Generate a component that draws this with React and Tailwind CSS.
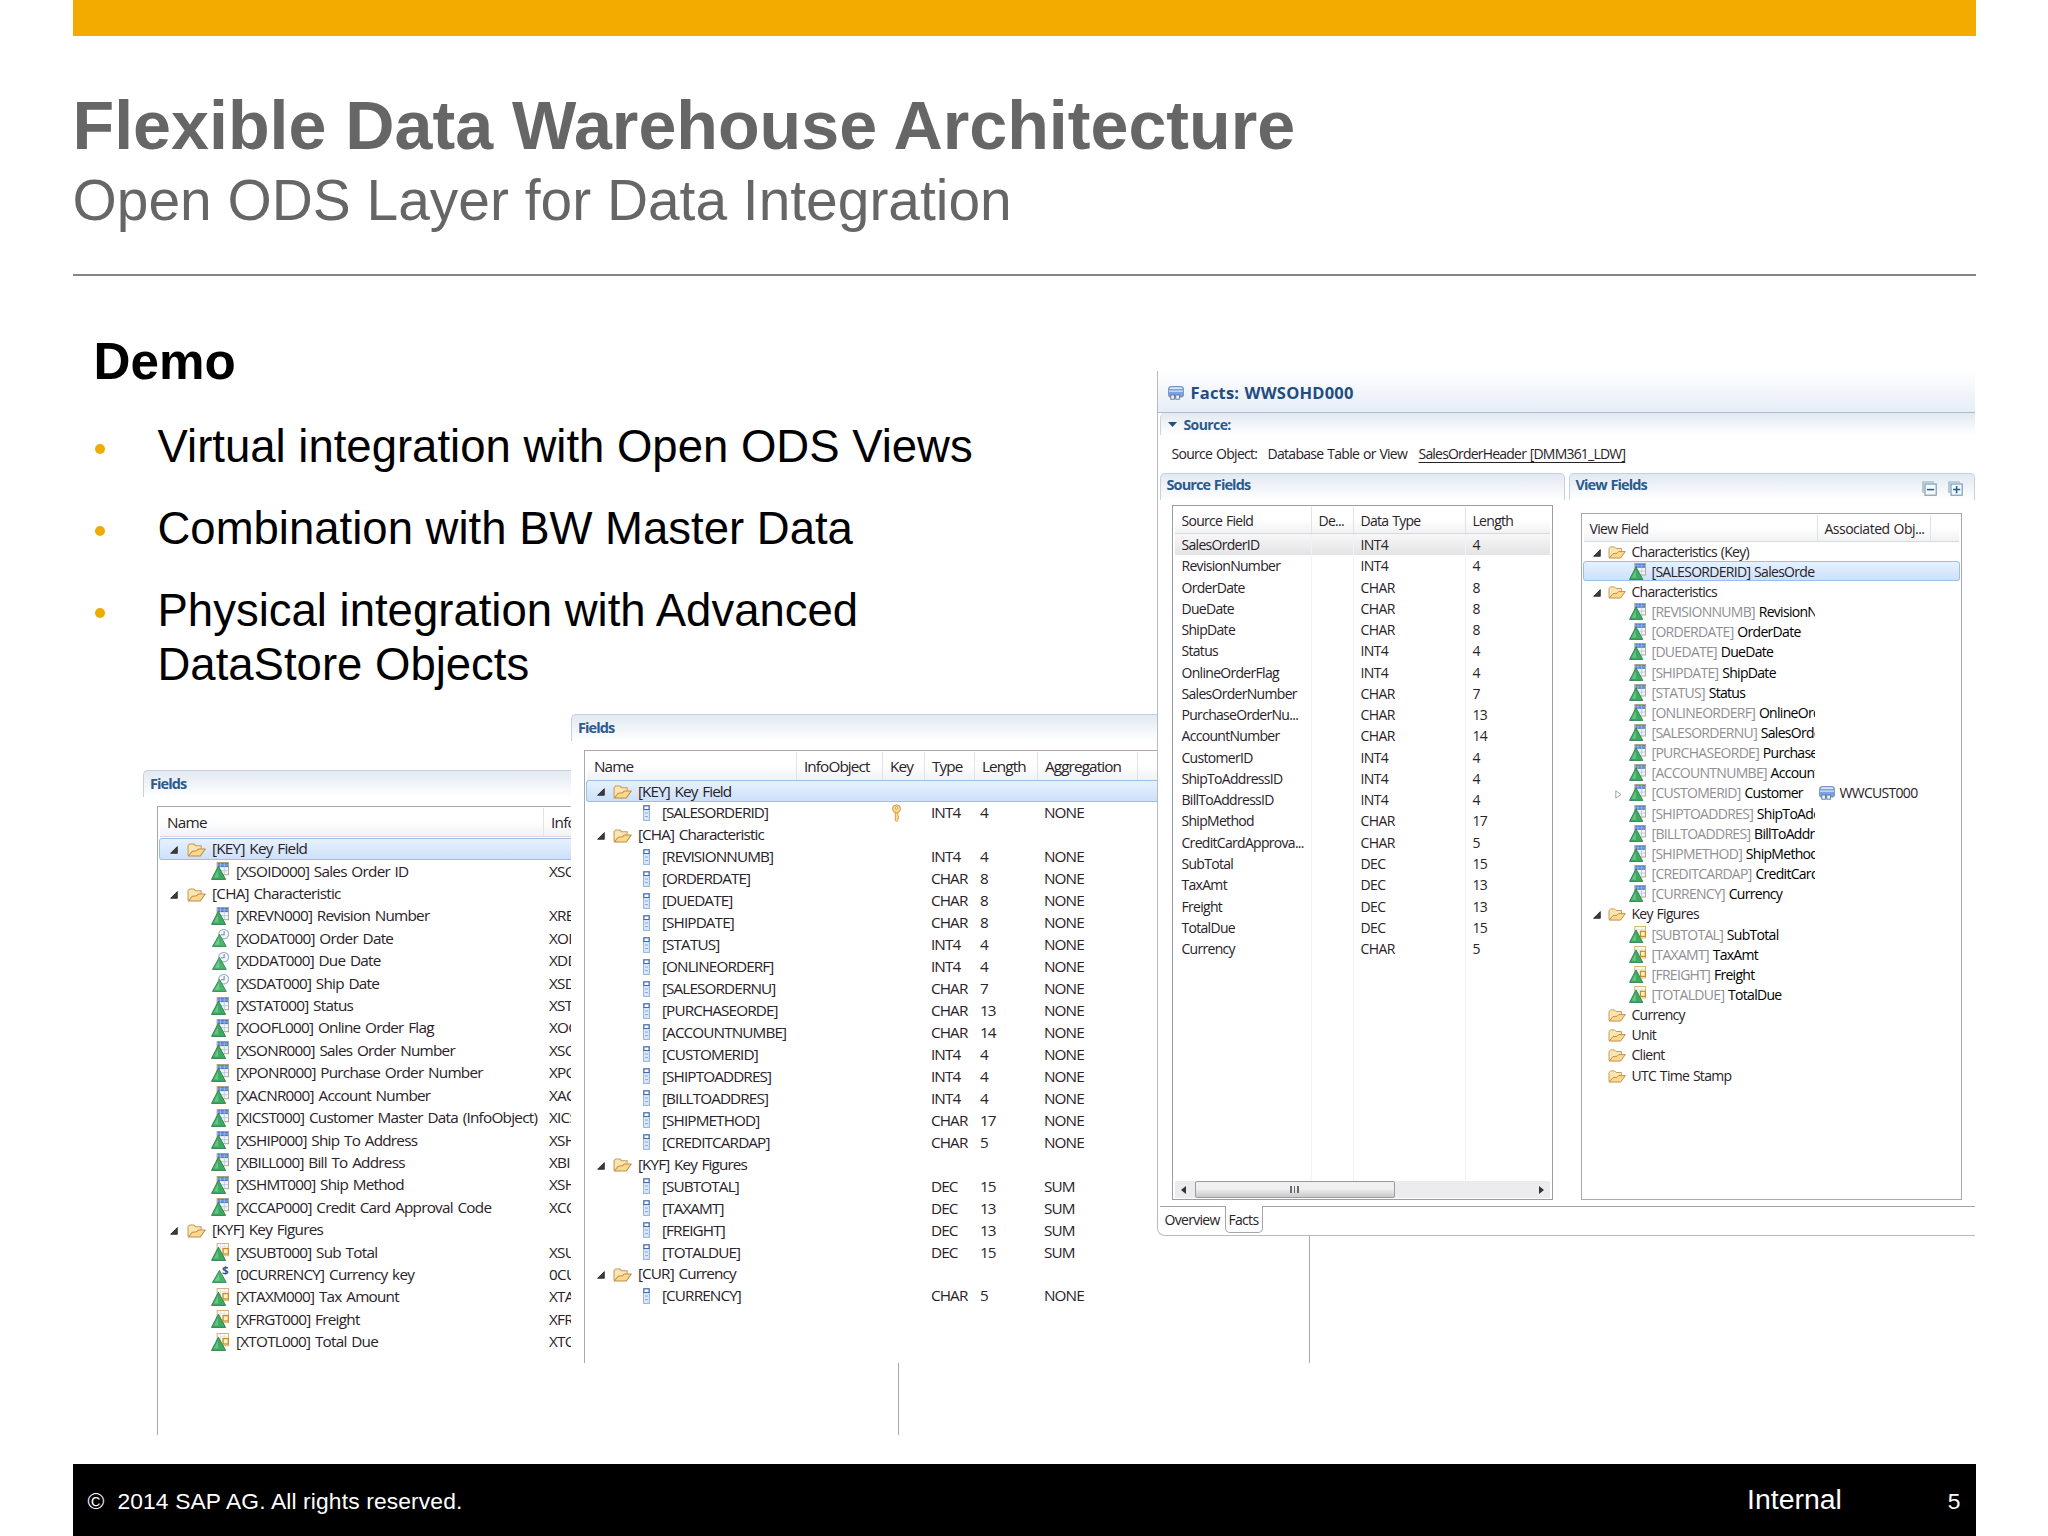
const segoe = "font-['Open_Sans','Noto_Sans',sans-serif]"

// label, icon, second column
const infoRows = [
  ['[KEY] Key Field', 'folder', '', true],
  ['[XSOID000] Sales Order ID', 'cha', 'XSOID000'],
  ['[CHA] Characteristic', 'folder', ''],
  ['[XREVN000] Revision Number', 'cha', 'XREVN000'],
  ['[XODAT000] Order Date', 'time', 'XODAT000'],
  ['[XDDAT000] Due Date', 'time', 'XDDAT000'],
  ['[XSDAT000] Ship Date', 'time', 'XSDAT000'],
  ['[XSTAT000] Status', 'cha', 'XSTAT000'],
  ['[XOOFL000] Online Order Flag', 'cha', 'XOOFL000'],
  ['[XSONR000] Sales Order Number', 'cha', 'XSONR000'],
  ['[XPONR000] Purchase Order Number', 'cha', 'XPONR000'],
  ['[XACNR000] Account Number', 'cha', 'XACNR000'],
  ['[XICST000] Customer Master Data (InfoObject)', 'cha', 'XICST000'],
  ['[XSHIP000] Ship To Address', 'cha', 'XSHIP000'],
  ['[XBILL000] Bill To Address', 'cha', 'XBILL000'],
  ['[XSHMT000] Ship Method', 'cha', 'XSHMT000'],
  ['[XCCAP000] Credit Card Approval Code', 'cha', 'XCCAP000'],
  ['[KYF] Key Figures', 'folder', ''],
  ['[XSUBT000] Sub Total', 'kyf', 'XSUBT000'],
  ['[0CURRENCY] Currency key', 'cur', '0CURRENCY'],
  ['[XTAXM000] Tax Amount', 'kyf', 'XTAXM000'],
  ['[XFRGT000] Freight', 'kyf', 'XFRGT000'],
  ['[XTOTL000] Total Due', 'kyf', 'XTOTL000'],
]

const dsoRows = [
  ['[KEY] Key Field'],
  ['[SALESORDERID]', 'INT4', '4', 'NONE'],
  ['[CHA] Characteristic'],
  ['[REVISIONNUMB]', 'INT4', '4', 'NONE'],
  ['[ORDERDATE]', 'CHAR', '8', 'NONE'],
  ['[DUEDATE]', 'CHAR', '8', 'NONE'],
  ['[SHIPDATE]', 'CHAR', '8', 'NONE'],
  ['[STATUS]', 'INT4', '4', 'NONE'],
  ['[ONLINEORDERF]', 'INT4', '4', 'NONE'],
  ['[SALESORDERNU]', 'CHAR', '7', 'NONE'],
  ['[PURCHASEORDE]', 'CHAR', '13', 'NONE'],
  ['[ACCOUNTNUMBE]', 'CHAR', '14', 'NONE'],
  ['[CUSTOMERID]', 'INT4', '4', 'NONE'],
  ['[SHIPTOADDRES]', 'INT4', '4', 'NONE'],
  ['[BILLTOADDRES]', 'INT4', '4', 'NONE'],
  ['[SHIPMETHOD]', 'CHAR', '17', 'NONE'],
  ['[CREDITCARDAP]', 'CHAR', '5', 'NONE'],
  ['[KYF] Key Figures'],
  ['[SUBTOTAL]', 'DEC', '15', 'SUM'],
  ['[TAXAMT]', 'DEC', '13', 'SUM'],
  ['[FREIGHT]', 'DEC', '13', 'SUM'],
  ['[TOTALDUE]', 'DEC', '15', 'SUM'],
  ['[CUR] Currency'],
  ['[CURRENCY]', 'CHAR', '5', 'NONE'],
]

const sourceRows = [
  ['SalesOrderID', 'INT4', '4'],
  ['RevisionNumber', 'INT4', '4'],
  ['OrderDate', 'CHAR', '8'],
  ['DueDate', 'CHAR', '8'],
  ['ShipDate', 'CHAR', '8'],
  ['Status', 'INT4', '4'],
  ['OnlineOrderFlag', 'INT4', '4'],
  ['SalesOrderNumber', 'CHAR', '7'],
  ['PurchaseOrderNu...', 'CHAR', '13'],
  ['AccountNumber', 'CHAR', '14'],
  ['CustomerID', 'INT4', '4'],
  ['ShipToAddressID', 'INT4', '4'],
  ['BillToAddressID', 'INT4', '4'],
  ['ShipMethod', 'CHAR', '17'],
  ['CreditCardApprova...', 'CHAR', '5'],
  ['SubTotal', 'DEC', '15'],
  ['TaxAmt', 'DEC', '13'],
  ['Freight', 'DEC', '13'],
  ['TotalDue', 'DEC', '15'],
  ['Currency', 'CHAR', '5'],
]

const viewRows = [
  { folder: 'Characteristics (Key)', open: true },
  { tech: '[SALESORDERID]', name: 'SalesOrderID', icon: 'cha', selected: true },
  { folder: 'Characteristics', open: true },
  { tech: '[REVISIONNUMB]', name: 'RevisionNumber', icon: 'cha' },
  { tech: '[ORDERDATE]', name: 'OrderDate', icon: 'cha' },
  { tech: '[DUEDATE]', name: 'DueDate', icon: 'cha' },
  { tech: '[SHIPDATE]', name: 'ShipDate', icon: 'cha' },
  { tech: '[STATUS]', name: 'Status', icon: 'cha' },
  { tech: '[ONLINEORDERF]', name: 'OnlineOrderFlag', icon: 'cha' },
  { tech: '[SALESORDERNU]', name: 'SalesOrderNumber', icon: 'cha' },
  { tech: '[PURCHASEORDE]', name: 'PurchaseOrderNumber', icon: 'cha' },
  { tech: '[ACCOUNTNUMBE]', name: 'AccountNumber', icon: 'cha' },
  { tech: '[CUSTOMERID]', name: 'Customer', icon: 'cha', assoc: 'WWCUST000' },
  { tech: '[SHIPTOADDRES]', name: 'ShipToAddressID', icon: 'cha' },
  { tech: '[BILLTOADDRES]', name: 'BillToAddressID', icon: 'cha' },
  { tech: '[SHIPMETHOD]', name: 'ShipMethod', icon: 'cha' },
  { tech: '[CREDITCARDAP]', name: 'CreditCardApproval', icon: 'cha' },
  { tech: '[CURRENCY]', name: 'Currency', icon: 'cha' },
  { folder: 'Key Figures', open: true },
  { tech: '[SUBTOTAL]', name: 'SubTotal', icon: 'kyf' },
  { tech: '[TAXAMT]', name: 'TaxAmt', icon: 'kyf' },
  { tech: '[FREIGHT]', name: 'Freight', icon: 'kyf' },
  { tech: '[TOTALDUE]', name: 'TotalDue', icon: 'kyf' },
  { folder: 'Currency' },
  { folder: 'Unit' },
  { folder: 'Client' },
  { folder: 'UTC Time Stamp' },
]

function Expanded() {
  return (
    <svg viewBox="0 0 8 8" className="w-[8px] h-[8px] shrink-0 mt-[3px]">
      <path d="M7.3 0.6V7.3H0.6Z" fill="#3c3c3c" stroke="#222" strokeWidth="0.8" />
    </svg>
  )
}

function Folder({ className }) {
  return (
    <svg viewBox="0 0 18 14" preserveAspectRatio="none" className={className}>
      <path d="M1 12.5V2.6L2.6 1h4l1.5 1.7h5.3v3" fill="#fbe6b2" stroke="#c8995a" strokeWidth="1" />
      <path d="M1.2 13L5 8.2L9 7.8L10.6 6H17.3L12.6 13Z" fill="#fbd98c" stroke="#bf8c48" strokeWidth="1" strokeLinejoin="round" />
    </svg>
  )
}

// green characteristic triangle with the type marker behind it
function TypeIcon({ type, className }) {
  return (
    <svg viewBox="0 0 17 18" preserveAspectRatio="none" className={className}>
      {type === 'cha' && (
        <g>
          <rect x="5.8" y="0.5" width="10.8" height="12.2" fill="#f0f4fb" stroke="#b3a684" strokeWidth="1" />
          <rect x="6.3" y="0.9" width="9.8" height="4.2" fill="#4f80cb" />
          <path d="M9 1.2v3.6M12.6 1.2v3.6M6.4 3h9.6" stroke="#b4cbed" strokeWidth="0.6" />
          <path d="M12.6 5.4v7M6.4 8.6h9.6" stroke="#b8c4dd" strokeWidth="0.8" />
        </g>
      )}
      {type === 'kyf' && (
        <g>
          <rect x="5.8" y="0.5" width="10.8" height="12.2" fill="#fdfbf4" stroke="#d3b47a" strokeWidth="1" />
          <path d="M9 1v11M12.6 1v4M6.4 3.8h9.6" stroke="#dcdedb" strokeWidth="0.7" />
          <rect x="11.4" y="5.6" width="5" height="5.4" fill="#fff2c4" stroke="#d68a1e" strokeWidth="1.3" />
        </g>
      )}
      {type === 'time' && (
        <g>
          <circle cx="12" cy="5.2" r="4.7" fill="#f3f7fa" stroke="#9fb1c1" strokeWidth="1.1" />
          <path d="M12.4 2V5.8H9.4" fill="none" stroke="#75899f" strokeWidth="1" />
        </g>
      )}
      {type === 'cha' || type === 'kyf' ? (
        <g>
          <path d="M7 4.2L13.8 17.4H0.5Z" fill="#3dab62" stroke="#277f48" strokeWidth="0.9" strokeLinejoin="round" />
          <path d="M6.4 8L2.8 15.6H7Z" fill="#86d59b" opacity="0.6" />
        </g>
      ) : (
        <g>
          <path d="M8 5.4L14.4 17.4H1.4Z" fill="#4bb46d" stroke="#2d8750" strokeWidth="0.9" strokeLinejoin="round" />
          <path d="M7.4 9L3.8 15.8H8Z" fill="#8ed8a2" opacity="0.6" />
        </g>
      )}
      {type === 'cur' && (
        <text x="10.4" y="9.2" fontSize="11" fontWeight="700" fill="#3c5484" letterSpacing="0" fontFamily="Open Sans">$</text>
      )}
    </svg>
  )
}

function ColumnIcon() {
  return (
    <svg viewBox="0 0 7 16" className="w-[7px] h-[16px] shrink-0">
      <rect x="0.6" y="0.6" width="5.8" height="14.8" fill="#dce9fb" stroke="#8fb0e0" strokeWidth="1" />
      <rect x="0.9" y="0.9" width="5.2" height="3.6" fill="#fff" stroke="#4169ac" strokeWidth="1.1" />
      <path d="M2 8h3M2 11.6h3" stroke="#84a8dc" strokeWidth="1" />
    </svg>
  )
}

function KeyIcon() {
  return (
    <svg viewBox="0 0 11 18" className="w-[11px] h-[18px]">
      <path d="M4.3 8v8.6l1.3 1l1.2-1V15l1.2-.8l-1.2-1l1-1l-1-1V8" fill="#fbdc96" stroke="#cf973f" strokeWidth="0.9" />
      <circle cx="5.5" cy="4.8" r="4" fill="#fbd78a" stroke="#d69d48" strokeWidth="1" />
      <circle cx="5.5" cy="3.8" r="1.2" fill="#fff" stroke="#c98d3a" strokeWidth="0.7" />
    </svg>
  )
}

function CubeIcon() {
  return (
    <svg viewBox="0 0 16 14" className="w-[16px] h-[14px] shrink-0">
      <path d="M.6 2.4Q.8.6 3 .6H13Q15.2.6 15.4 2.4V9.4Q15.2 11 14 11H2Q.8 11 .6 9.4Z" fill="#7ba3df" stroke="#6582b0" strokeWidth="0.8" />
      <path d="M1.4 3Q1.8 1.2 3.4 1.2H12.6Q14.2 1.2 14.6 3Z" fill="#dbe7f7" />
      <path d="M1 5.2h14" stroke="#bdd5f5" strokeWidth="1.6" />
      <rect x="2.8" y="9" width="3.6" height="4.2" fill="#f2f6fd" stroke="#56749f" strokeWidth="0.9" />
      <rect x="7.8" y="9" width="3.6" height="4.2" fill="#f2f6fd" stroke="#56749f" strokeWidth="0.9" />
    </svg>
  )
}

function TreeToggle({ plus }) {
  return (
    <svg viewBox="0 0 15 15" className="w-[15px] h-[15px]">
      <path d="M1 12V1h11" fill="none" stroke="#8fa9bf" strokeWidth="1.2" />
      <rect x="3" y="3" width="11.2" height="11.2" fill="#f5fafd" stroke="#7592ad" strokeWidth="1.1" />
      <path d={plus ? 'M5 8.6h7.2M8.6 5v7.2' : 'M5 8.6h7.2'} stroke="#1d5c94" strokeWidth="1.5" />
    </svg>
  )
}

function SectionBar({ title, className = 'leading-[25px]', children }) {
  return (
    <div className={`flex justify-between h-[27px] rounded-t-[5px] border-t border-l border-[#c3d1e0] bg-linear-to-b from-[#e2e9f2] to-white ${className}`}>
      <span className="pl-[6px] text-[14.5px] font-bold text-[#2b5b8f] tracking-[-0.9px]">{title}</span>
      {children}
    </div>
  )
}

function HeadCell({ className, children }) {
  return <div className={`shrink-0 h-full flex items-center border-r border-[#e2e3e8] whitespace-nowrap ${className}`}>{children}</div>
}

const headBg = 'flex border-b border-[#d9dadf] bg-linear-to-b from-white from-50% to-[#f1f2f4]'
const selected = 'rounded-[3px] outline outline-[#9dbfe6] -outline-offset-1 bg-linear-to-b from-[#e9f2fd] to-[#cbe0fa]'
const selectedGray = 'bg-linear-to-b from-[#f7f7f8] to-[#e4e4e6]'

function InfoObjectPanel() {
  return (
    <div className={`absolute left-[143px] top-[770px] w-[756px] h-[665px] bg-white text-[15.3px] text-[#2a2228] tracking-[-0.75px] [word-spacing:1.4px] ${segoe}`}>
      <SectionBar title="Fields" />
      <div className="ml-[14px] mt-[9px] h-[629px] border-t border-x border-[#a6a9b0]">
        <div className={`h-[30px] mx-[2px] pt-[1px] ${headBg}`}>
          <HeadCell className="w-[384px] pl-[7px]">Name</HeadCell>
          <div className="pl-[7px] flex items-center">InfoObject</div>
        </div>
        <div className="pt-[0.5px]">
          {infoRows.map(([label, icon, info, isSelected]) => (
            <div key={label} className={`flex items-center h-[22.41px] mx-[1px] whitespace-nowrap ${isSelected ? selected : ''}`}>
              {icon === 'folder' ? (
                <div className="flex items-center w-[390px] pl-[11px]">
                  <Expanded />
                  <Folder className="w-[19px] h-[14px] ml-[9px] mt-[2px]" />
                  <span className="ml-[6px]">{label}</span>
                </div>
              ) : (
                <div className="flex items-center w-[390px] pl-[52px]">
                  <TypeIcon type={icon} className="w-[18px] h-[18px]" />
                  <span className="ml-[7px]">{label}</span>
                </div>
              )}
              <span>{info}</span>
            </div>
          ))}
        </div>
      </div>
    </div>
  )
}

function DataStorePanel() {
  return (
    <div className={`absolute left-[571px] top-[714px] w-[739px] h-[649px] bg-white text-[15.3px] text-[#2a2228] tracking-[-0.9px] [word-spacing:1.6px] ${segoe}`}>
      <SectionBar title="Fields" />
      <div className="ml-[13px] mt-[9px] h-[613px] border-t border-x border-[#a6a9b0]">
        <div className={`h-[30px] mx-[2px] pt-[1px] ${headBg}`}>
          <HeadCell className="w-[210px] pl-[7px]">Name</HeadCell>
          <HeadCell className="w-[86px] pl-[7px]">InfoObject</HeadCell>
          <HeadCell className="w-[42px] pl-[7px]">Key</HeadCell>
          <HeadCell className="w-[50px] pl-[7px]">Type</HeadCell>
          <HeadCell className="w-[63px] pl-[7px]">Length</HeadCell>
          <HeadCell className="w-[100px] pl-[7px]">Aggregation</HeadCell>
        </div>
        <div className="-mt-[1px]">
          {dsoRows.map(([label, type, length, aggregation], i) => (
            <div key={label} className={`flex items-center h-[21.96px] mx-[1px] whitespace-nowrap ${i === 0 ? selected : ''}`}>
              {!type ? (
                <div className="flex items-center pl-[11px]">
                  <Expanded />
                  <Folder className="w-[19px] h-[14px] ml-[8px] mt-[2px]" />
                  <span className="ml-[6px]">{label}</span>
                </div>
              ) : (
                <>
                  <div className="flex items-center w-[305px] pl-[57px]">
                    <ColumnIcon />
                    <span className="ml-[12px]">{label}</span>
                  </div>
                  <div className="w-[40px]">{i === 1 && <KeyIcon />}</div>
                  <div className="w-[49px]">{type}</div>
                  <div className="w-[64px]">{length}</div>
                  <div>{aggregation}</div>
                </>
              )}
            </div>
          ))}
        </div>
      </div>
    </div>
  )
}

function SourceFields() {
  return (
    <div className="w-[405px]">
      <SectionBar title="Source Fields" className="leading-[22px] border-r" />
      <div className="flex flex-col ml-[12px] mt-[5px] w-[381px] h-[695px] border border-[#9a9ca3]">
        <div className={`h-[28px] shrink-0 mx-[2px] pt-[1px] ${headBg}`}>
          <HeadCell className="w-[137px] pl-[7px]">Source Field</HeadCell>
          <HeadCell className="w-[42px] pl-[7px]">De...</HeadCell>
          <HeadCell className="w-[112px] pl-[7px]">Data Type</HeadCell>
          <div className="pl-[7px] flex items-center">Length</div>
        </div>
        <div className="flex-1 flex mx-[2px]">
          <div className="w-[137px] border-r border-[#f1f1f6]">
            {sourceRows.map(([field], i) => (
              <div key={field} className={`h-[21.27px] pl-[7px] leading-[22px] whitespace-nowrap ${i === 0 ? selectedGray : ''}`}>{field}</div>
            ))}
          </div>
          <div className="w-[42px] border-r border-[#f1f1f6]">
            <div className={`h-[21.27px] ${selectedGray}`} />
          </div>
          <div className="w-[112px] border-r border-[#f1f1f6] tracking-[-0.6px]">
            {sourceRows.map(([field, type], i) => (
              <div key={field} className={`h-[21.27px] pl-[7px] leading-[22px] ${i === 0 ? selectedGray : ''}`}>{type}</div>
            ))}
          </div>
          <div className="flex-1">
            {sourceRows.map(([field, , length], i) => (
              <div key={field} className={`h-[21.27px] pl-[7px] leading-[22px] ${i === 0 ? selectedGray : ''}`}>{length}</div>
            ))}
          </div>
        </div>
        <div className="flex items-center h-[17px] shrink-0 mx-[2px] mb-[1px] bg-[#ececee]">
          <svg viewBox="0 0 5 8" className="w-[5px] h-[8px] ml-[6px]"><path d="M5 0V8L0 4Z" fill="#333" /></svg>
          <div className="flex items-center justify-center gap-[2px] w-[200px] h-full ml-[9px] rounded-[2px] border border-[#9b9b9e] bg-linear-to-b from-[#f0f0f1] from-45% to-[#c9c9cc]">
            <i className="w-[1.5px] h-[7px] bg-[#6a6a6e]" />
            <i className="w-[1.5px] h-[7px] bg-[#6a6a6e]" />
            <i className="w-[1.5px] h-[7px] bg-[#6a6a6e]" />
          </div>
          <svg viewBox="0 0 5 8" className="w-[5px] h-[8px] ml-auto mr-[6px]"><path d="M0 0V8L5 4Z" fill="#333" /></svg>
        </div>
      </div>
    </div>
  )
}

function ViewFields() {
  return (
    <div className="w-[406px]">
      <SectionBar title="View Fields" className="leading-[22px] border-r">
        <div className="flex gap-[11px] pt-[7px] pr-[11px]">
          <TreeToggle />
          <TreeToggle plus />
        </div>
      </SectionBar>
      <div className="ml-[12px] mt-[13px] w-[381px] h-[687px] border border-[#a6a9b0]">
        <div className={`h-[28px] mx-[2px] pt-[1px] ${headBg}`}>
          <HeadCell className="w-[234px] pl-[6px]">View Field</HeadCell>
          <HeadCell className="w-[113px] pl-[7px] tracking-[-0.5px]">Associated Obj...</HeadCell>
        </div>
        <div className="-mt-[1px]">
          {viewRows.map(row => row.folder ? (
            <div key={row.folder} className="flex items-center h-[20.17px] pl-[11px]">
              {row.open ? <Expanded /> : <div className="w-[8px]" />}
              <Folder className="w-[18px] h-[13px] ml-[7px] mt-[2px]" />
              <span className="ml-[6px]">{row.folder}</span>
            </div>
          ) : (
            <div key={row.tech} className={`flex items-center h-[20.17px] mx-[1px] whitespace-nowrap ${row.selected ? selected : ''}`}>
              <div className="flex items-center justify-end w-[46px] pr-[7px] shrink-0">
                {row.assoc && (
                  <svg viewBox="0 0 7 9" className="w-[7px] h-[9px] mt-[3px]"><path d="M.8.8L6 4.5L.8 8.2Z" fill="#fff" stroke="#999" strokeWidth="0.9" /></svg>
                )}
              </div>
              <TypeIcon type={row.icon} className="w-[17px] h-[17px] shrink-0" />
              <div className="w-[163px] ml-[6px] shrink-0 overflow-hidden">
                <span className={row.selected ? '' : 'text-[#8f8f93]'}>{row.tech}</span>{' '}
                <span className={row.selected ? '' : 'text-black'}>{row.name}</span>
              </div>
              {row.assoc && (
                <div className="flex items-center gap-[5px] ml-[4px]">
                  <CubeIcon />
                  <span>{row.assoc}</span>
                </div>
              )}
            </div>
          ))}
        </div>
      </div>
    </div>
  )
}

function FactsPanel() {
  return (
    <div className={`absolute left-[1156.5px] top-[371px] w-[818.5px] h-[865px] bg-white border-l border-b border-[#b9bbc1] rounded-bl-[8px] text-[14px] text-[#2a2228] tracking-[-0.7px] [word-spacing:0.8px] ${segoe}`}>
      <div className="flex items-center h-[42px] pt-[3px] pl-[10px] gap-[7px] border-b border-[#aebccb] bg-linear-to-b from-white to-[#e6edf6]">
        <CubeIcon />
        <span className="text-[16.5px] font-bold text-[#1f4c82] tracking-[0.2px]">Facts: WWSOHD000</span>
      </div>
      <div className="flex items-center h-[22px] ml-[2px] pl-[7px] gap-[7px] rounded-tl-[5px] border-l border-[#c9d5e2] bg-linear-to-b from-[#e2e9f2] to-white">
        <svg viewBox="0 0 9 5" className="w-[9px] h-[5px]"><path d="M0 0H9L4.5 5Z" fill="#1f4c82" /></svg>
        <span className="text-[14px] font-bold text-[#2b5b8f] tracking-[-0.6px]">Source:</span>
      </div>
      <div className="flex items-center h-[38px] pl-[14px] pb-[2px] whitespace-nowrap">
        <span className="w-[96px]">Source Object:</span>
        <span className="w-[151px]">Database Table or View</span>
        <span className="underline underline-offset-[3px] tracking-[-0.8px]">SalesOrderHeader [DMM361_LDW]</span>
      </div>
      <div className="flex gap-[4px] pl-[2px]">
        <SourceFields />
        <ViewFields />
      </div>
      <div className="flex h-[27px] mt-[6px] pl-[2px]">
        <div className="w-[65px] pl-[5px] border-t border-[#a3a5ab] leading-[25px]">Overview</div>
        <div className="w-[38px] pl-[3px] border-x border-b border-[#a3a5ab] rounded-b-[5px] leading-[27px]">Facts</div>
        <div className="flex-1 border-t border-[#a3a5ab]" />
      </div>
    </div>
  )
}

function Bullet({ children }) {
  return (
    <li className="flex">
      <span className="w-[10px] h-[10px] mt-[24px] mr-[53px] ml-[1px] shrink-0 rounded-full bg-[#f0ab00]" />
      <span>{children}</span>
    </li>
  )
}

export default function App() {
  return (
    <div className="relative flex flex-col w-[2048px] h-[1536px] px-[72.5px] overflow-hidden bg-white font-['Liberation_Sans',Arial,sans-serif]">
      <div className="h-[36px] shrink-0 bg-[#f3ab00]" />
      <header className="h-[240px] shrink-0 pt-[51px] border-b-2 border-[#858585] text-[#666]">
        <h1 className="text-[68.2px] leading-[76px] font-bold">Flexible Data Warehouse Architecture</h1>
        <p className="text-[56.9px] leading-[74px]">Open ODS Layer for Data Integration</p>
      </header>
      <main className="flex-1 pt-[55.5px] pl-[21px] text-black">
        <h2 className="text-[51.2px] leading-[60px] font-bold">Demo</h2>
        <ul className="flex flex-col gap-[27.7px] w-[900px] mt-[28px] text-[45.5px] leading-[54.5px]">
          <Bullet>Virtual integration with Open ODS Views</Bullet>
          <Bullet>Combination with BW Master Data</Bullet>
          <Bullet>Physical integration with Advanced<br />DataStore Objects</Bullet>
        </ul>
      </main>

      <InfoObjectPanel />
      <DataStorePanel />
      <FactsPanel />

      <footer className="flex items-center h-[72px] shrink-0 pl-[15px] pr-[15px] bg-black text-white">
        <span className="mt-[2px] text-[22.8px] tracking-[0.14px] whitespace-pre">©  2014 SAP AG. All rights reserved.</span>
        <span className="ml-auto -mt-[2px] text-[28.4px]">Internal</span>
        <span className="ml-[106px] mt-[2px] text-[22.8px]">5</span>
      </footer>
    </div>
  )
}
